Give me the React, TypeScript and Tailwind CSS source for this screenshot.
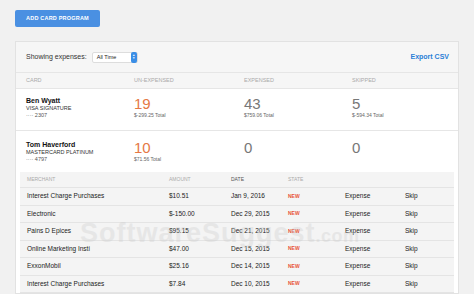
import React from "react";

const cards = [
  {
    name: "Ben Wyatt",
    kind: "VISA SIGNATURE",
    last: "2307",
    un: "19",
    unTotal: "$-299.25 Total",
    ex: "43",
    exTotal: "$759.06 Total",
    sk: "5",
    skTotal: "$-594.34 Total",
  },
  {
    name: "Tom Haverford",
    kind: "MASTERCARD PLATINUM",
    last: "4797",
    un: "10",
    unTotal: "$71.56 Total",
    ex: "0",
    exTotal: "",
    sk: "0",
    skTotal: "",
  },
];

const rows = [
  ["Interest Charge Purchases", "$10.51", "Jan 9, 2016"],
  ["Electronic", "$-150.00", "Dec 29, 2015"],
  ["Pains D Epices", "$95.15", "Dec 21, 2015"],
  ["Online Marketing Insti", "$47.00", "Dec 15, 2015"],
  ["ExxonMobil", "$25.16", "Dec 14, 2015"],
  ["Interest Charge Purchases", "$7.84", "Dec 10, 2015"],
];

const cardCols = "grid grid-cols-[108px_110px_108px_1fr] pl-[10px]";
const rowCols = "grid grid-cols-[142px_62px_57px_57px_60px_1fr] pl-[7px] items-center";

export default function App() {
  return (
    <div
      className="relative h-[294px] w-[474px] overflow-hidden bg-[#f1f1f1] text-[#333]"
      style={{ fontFamily: '"Liberation Sans", Arial, sans-serif' }}
    >
      {/* top action */}
      <div className="flex pl-[15px] pt-[10px]">
        <button className="block h-[17px] w-[85px] rounded-[2px] bg-[#4a90e2] text-[5.5px] font-bold tracking-[0.2px] text-white">
          ADD CARD PROGRAM
        </button>
      </div>

      {/* panel */}
      <div className="ml-[15px] mt-[14px] w-[444px] border border-[#e2e2e2] bg-white">
        <div className="flex h-[30px] items-center justify-between bg-[#f6f6f6] pl-[10px] pr-[9px]">
          <div className="flex items-center gap-[5px]">
            <span className="text-[7px] text-[#333]">Showing expenses:</span>
            <div className="flex h-[11px] w-[46px] items-center justify-between rounded-[2px] border border-[#ddd] bg-white pl-[4px]">
              <span className="text-[5.5px] text-[#222]">All Time</span>
              <span className="flex h-[11px] w-[6px] flex-col items-center justify-center rounded-[2px] bg-[#3a8ee6] text-[3px] leading-[3px] text-white">
                <span>▲</span>
                <span>▼</span>
              </span>
            </div>
          </div>
          <span className="text-[7px] font-semibold text-[#2a7fd6]">Export CSV</span>
        </div>

        <div className={`${cardCols} h-[17px] items-center border-y border-[#e6e6e6] bg-[#f6f6f6] text-[5.5px] text-[#aaa]`}>
          <span>CARD</span>
          <span>UN-EXPENSED</span>
          <span>EXPENSED</span>
          <span>SKIPPED</span>
        </div>

        {cards.map((c, i) => (
          <div
            key={c.name}
            className={`${cardCols} ${i === 0 ? "h-[42px] border-b border-[#e6e6e6] pt-[6px]" : "h-[41px] pt-[8px]"}`}
          >
            <div className="flex flex-col pt-[1px]">
              <span className="text-[7px] font-bold leading-[9px] text-[#111]">{c.name}</span>
              <span className="text-[5.5px] leading-[7px] text-[#333]">{c.kind}</span>
              <span className="text-[5.5px] leading-[7px] text-[#555]">···· {c.last}</span>
            </div>
            <div className="flex flex-col">
              <span className="text-[15px] font-light leading-[17px] text-[#e57845]">{c.un}</span>
              <span className="text-[5px] leading-[7px] text-[#666]">{c.unTotal}</span>
            </div>
            <div className="flex flex-col">
              <span className="text-[15px] font-light leading-[17px] text-[#777]">{c.ex}</span>
              <span className="text-[5px] leading-[7px] text-[#666]">{c.exTotal}</span>
            </div>
            <div className="flex flex-col">
              <span className="text-[15px] font-light leading-[17px] text-[#777]">{c.sk}</span>
              <span className="text-[5px] leading-[7px] text-[#666]">{c.skTotal}</span>
            </div>
          </div>
        ))}

        {/* expenses of the open card */}
        <div className="px-[4px]">
          <div className="w-[434px] bg-[#f4f4f4]">
            <div className={`${rowCols} h-[16px] border-b border-[#e4e4e4] text-[5px] text-[#aaa]`}>
              <span>MERCHANT</span>
              <span>AMOUNT</span>
              <span className="text-[#555]">DATE</span>
              <span>STATE</span>
              <span />
              <span />
            </div>
            {rows.map((r, i) => (
              <div
                key={i}
                className={`${rowCols} h-[17.5px] border-b border-[#e4e4e4] text-[6.5px] text-[#222]`}
              >
                <span>{r[0]}</span>
                <span>{r[1]}</span>
                <span>{r[2]}</span>
                <span className="text-[5px] font-bold text-[#e8533a]">NEW</span>
                <span>Expense</span>
                <span>Skip</span>
              </div>
            ))}
          </div>
        </div>
      </div>

      {/* watermark */}
      <div className="pointer-events-none absolute left-[80px] top-[213px] flex items-baseline text-[27px] font-bold tracking-[1px] text-[#c8c8c8] opacity-30">
        SoftwareSuggest<span className="text-[18px] tracking-[0.5px]">.com</span>
      </div>
    </div>
  );
}
